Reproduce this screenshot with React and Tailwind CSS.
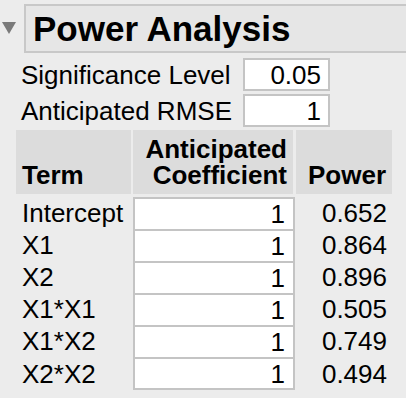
import React from "react";

const rows = [
    { term: "Intercept", coef: "1", power: "0.652" },
    { term: "X1", coef: "1", power: "0.864" },
    { term: "X2", coef: "1", power: "0.896" },
    { term: "X1*X1", coef: "1", power: "0.505" },
    { term: "X1*X2", coef: "1", power: "0.749" },
    { term: "X2*X2", coef: "1", power: "0.494" },
];

const App = () => {
    return (
        <div
            className="w-[406px] h-[398px] overflow-hidden bg-[#ececec] text-black pt-[4px]"
            style={{ fontFamily: '"Liberation Sans", Arial, sans-serif' }}
        >
            {/* Outline header */}
            <div className="flex items-start">
                <div className="w-[24px] pt-[18px] pl-[2px]">
                    <svg width="14" height="12" viewBox="0 0 14 12">
                        <polygon points="0,0 14,0 7,12" fill="#7a7a7a" />
                    </svg>
                </div>
                <div className="flex-1 h-[49px] border-2 border-r-0 border-[#c8c8c8] bg-[#e6e6e6] flex items-center pl-[7px]">
                    <span className="text-[35px] font-bold leading-none">Power Analysis</span>
                </div>
            </div>

            {/* Inputs */}
            <div className="grid grid-cols-[auto_87px] gap-x-[11px] gap-y-[3px] items-center pl-[21px] mt-[5px] w-max text-[26px] leading-none">
                <span>Significance Level</span>
                <div className="h-[33px] border-2 border-[#c4c4c4] bg-white flex items-center justify-end pr-[7px]">0.05</div>
                <span>Anticipated RMSE</span>
                <div className="h-[33px] border-2 border-[#c4c4c4] bg-white flex items-center justify-end pr-[7px]">1</div>
            </div>

            {/* Table */}
            <div className="ml-[16px] mt-[3px] w-[377px] text-[26px]">
                <div className="grid grid-cols-[115px_160px_97px] gap-x-[2px] h-[64px] font-bold leading-[26px]">
                    <div className="bg-[#dcdcdc] flex items-end pl-[6px] pb-[6px]">Term</div>
                    <div className="bg-[#dcdcdc] flex flex-col items-end justify-end pr-[6px] pb-[6px] text-right">
                        <span>Anticipated</span>
                        <span>Coefficient</span>
                    </div>
                    <div className="bg-[#dcdcdc] flex items-end justify-end pr-[6px] pb-[6px] ml-[1px]">Power</div>
                </div>
                <div className="mt-[3px]">
                    {rows.map((r, i) => (
                        <div key={r.term} className="grid grid-cols-[117px_162px_98px] h-[32px] leading-none">
                            <div className="flex items-center pl-[6px]">{r.term}</div>
                            <div
                                className={`bg-white border-x-2 border-t-2 border-[#c4c4c4] flex items-center justify-end pr-[8px] ${
                                    i === rows.length - 1 ? "border-b-2 h-[33px]" : ""
                                }`}
                            >
                                {r.coef}
                            </div>
                            <div className="flex items-center justify-end pr-[6px]">{r.power}</div>
                        </div>
                    ))}
                </div>
            </div>
        </div>
    );
};

export default App;
